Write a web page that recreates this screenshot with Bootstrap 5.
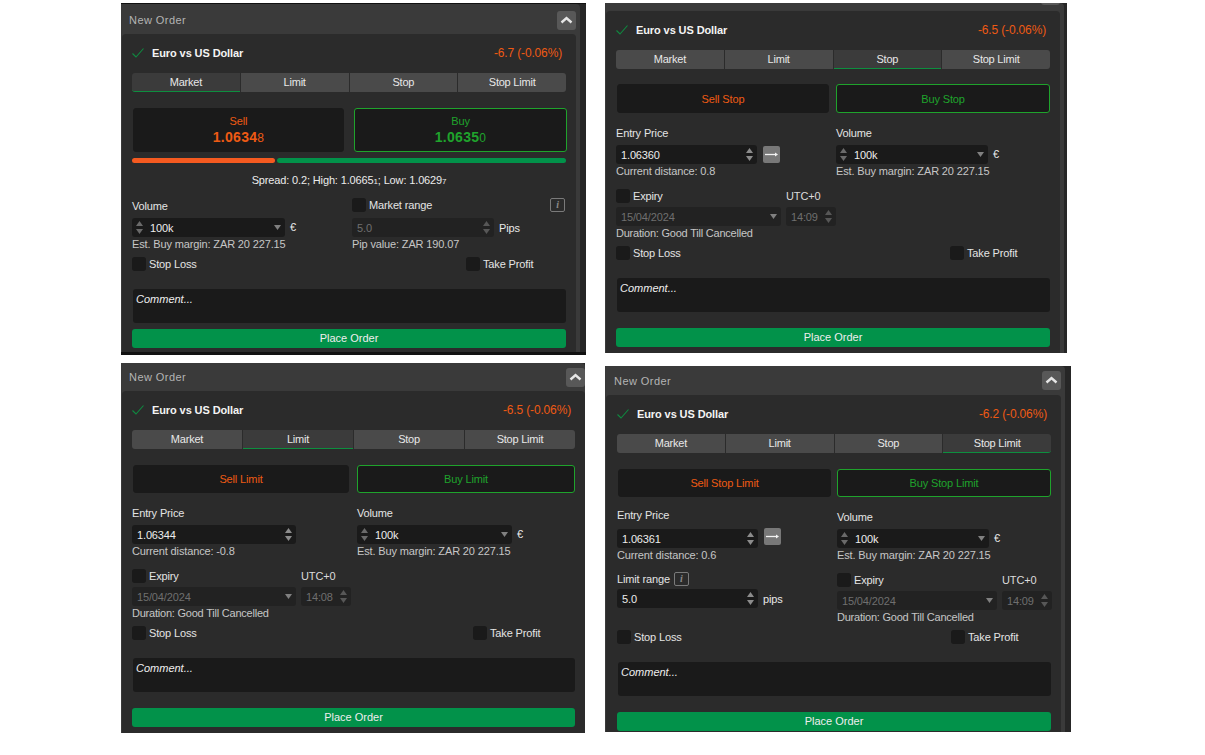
<!DOCTYPE html>
<html lang="en">
<head>
<meta charset="utf-8">
<title>New Order</title>
<link href="https://cdn.jsdelivr.net/npm/bootstrap@5.3.0/dist/css/bootstrap.min.css" rel="stylesheet">
<style>
html,body{background:#fff;margin:0;height:755px;overflow:hidden}
body{font:11px/16px "Liberation Sans",Arial,sans-serif;color:#dedede;letter-spacing:-.14px}
.ow{position:absolute;background:#262626;overflow:hidden}
.ow1{left:121px;top:3px;width:465px;height:352px;border-top:1px solid #111;border-bottom:3px solid #111;--r:6px;--x:4px;--a:220px;--tp:334px;--s:211px;--g:10px;--b:213px;--v:153px;--d:165px;--e:141px;--hd:30px;--pl:10px;--sm:16px;--sh:29px;--ht:7px}
.ow2{left:605px;top:3px;width:462px;height:350px;--r:3px;--x:4px;--a:220px;--tp:334px;--s:212px;--g:7px;--b:214px;--v:152px;--d:165px;--e:141px;--hd:8px;--pl:10px;--sm:15px;--sh:29px;--ht:7px}
.ow3{left:121px;top:363px;width:464px;height:370px;--r:0px;--x:0px;--a:225px;--tp:341px;--s:216px;--g:8px;--b:218px;--v:155px;--d:164px;--e:164px;--hd:28px;--pl:10px;--sm:16px;--sh:28px;--ht:7px}
.ow4{left:605px;top:366px;width:466px;height:366px;--r:6px;--x:4px;--a:220px;--tp:334px;--s:213px;--g:6px;--b:214px;--v:152px;--d:160px;--e:141px;--hd:29px;--pl:11px;--sm:16px;--sh:28px;--ht:8px}
.shell{background:#3a3a3a;height:100%;margin-right:var(--r);padding:0 var(--x) 0 1px;border-radius:0 4px 0 0}
.hdr{height:var(--hd);color:#b4b4b4;letter-spacing:.45px;padding-left:var(--ht)}
.ow1 .hdr{padding-top:2px}
.hdr-peek{overflow:hidden;align-items:flex-start!important}
.hdr-peek .chev{margin-top:-17px}
.chev{width:19px;height:19px;background:#585858;border-radius:3px;flex:none}
.pane{background:#2b2b2b;height:calc(100% - var(--hd));padding:11px 10px 0 var(--pl);border-radius:4px 4px 0 0}
.ttl{height:16px}
.ttl b{font-weight:700;color:#f4f4f4;letter-spacing:-.1px;margin-left:8px}
.chg{color:#ee5a14;font-size:12px;letter-spacing:-.15px;margin-right:4px}
.tabs{gap:1px;margin-top:12px;height:19px}
.tabbtn{flex:1 1 0;background:#4a4a4a;color:#e8e8e8;border:0;border-radius:0;padding:0;font:inherit;letter-spacing:-.22px;line-height:19px;height:19px}
.tabs .tabbtn:first-child{border-radius:3px 0 0 3px}
.tabs .tabbtn:last-child{border-radius:0 3px 3px 0}
.tabbtn.on{background:#3b3b3b;border-bottom:1px solid #0d8f3f}
.side{display:grid;grid-template-columns:var(--s) var(--b);column-gap:var(--g);margin:var(--sm) 0 0 1px}
.tall .sidebtn{height:44px}
.sidebtn{height:var(--sh);background:#1a1a1a;border-radius:3px;border:1px solid #1a1a1a;font:inherit;letter-spacing:-.14px;padding:0;line-height:14px}
.sell{color:#ee5a14}
.buy{color:#1fa32c;border-color:#1fa32c}
.px{display:block;font-weight:700;font-size:14px;line-height:17px;margin-top:1px;letter-spacing:.3px}
.px i{font-style:normal;font-weight:400;font-size:12px}
.bars{gap:2px;height:5px;margin-top:6px}
.bar-s{width:143px;background:#f55a20;border-radius:3px}
.bar-b{flex:1;background:#02924a;border-radius:3px}
.spr{margin-top:9px;text-align:center;color:#ececec;height:16px}
.spr sub{font-size:8px;vertical-align:baseline;position:static}
.cols{display:grid;grid-template-columns:var(--a) 1fr;margin-top:12px}
.mk{margin-top:10px}
.lbl{height:16px;color:#e4e4e4}
.fld{height:19px;background:#1a1a1a;border-radius:3px;margin-top:4px;padding:0 4px;color:#ececec;gap:5px}
.fld-in{background:transparent!important;border:0;padding:0;margin:0;font:inherit;letter-spacing:inherit;color:inherit!important;min-width:0;height:19px;border-radius:0;box-shadow:none!important;flex:1 1 0}
.fld.off{color:#6f6f6f;background:#222}
.fld.off .sp{opacity:.5}
.wv{width:var(--v)}
.we{width:var(--e)}
.wm{width:142px}
.wd{width:var(--d)}
.wt{width:50px}
.pad{padding-left:1px}
.unit{margin-left:5px;margin-top:5px;color:#e8e8e8}
.unit-p{margin-top:6px}
.hint{height:15px;line-height:15px;color:#c6c6c6}
.hint-d{letter-spacing:-.22px}
.cb{width:14px;height:14px;margin:0;background:#1a1a1a;border:0;border-radius:3px;flex:none;float:none!important}
.cbl{height:14px;line-height:14px;gap:3px;color:#e4e4e4}
.cbl label{white-space:nowrap}
.stops{display:grid;grid-template-columns:var(--tp) 1fr;margin-top:5px}
.cmt{display:block;width:calc(100% - 1px);margin:18px 0 0 1px;height:34px;min-height:34px;resize:none;background:#1a1a1a!important;border:0;border-radius:3px;padding:2px 3px;font:italic 11px/16px "Liberation Sans",Arial,sans-serif;color:#eee;box-shadow:none!important}
.cmt::placeholder{color:#eee;opacity:1}
.place{display:block;width:100%;height:19px;margin-top:16px;background:#02924a;border:0;border-radius:3px;padding:0;font:inherit;line-height:19px;color:#eee}
.place.near{margin-top:6px}
.arw{width:17px;height:17px;background:#787878;border-radius:2px;margin:5px 0 0 6px;flex:none}
.ibox{width:15px;height:14px;border:1px solid #7a7a7a;border-radius:2px;font:italic 700 10px/12px "Liberation Serif",serif;color:#8a8a8a;text-align:center;flex:none}
.ibox-r{margin-right:1px}
.sp{width:7px;height:13px;flex:none}
.sp.l{margin-right:2px;opacity:.7}
.dn{width:7px;height:5px;flex:none}
.mid{display:block}
.expm{margin-top:10px;display:flex;align-items:center;width:calc(var(--d) + 55px);justify-content:space-between}
.utc{width:50px;color:#dcdcdc;height:14px;line-height:14px}
.daterow{display:flex;gap:5px}
.daterow .fld{margin-top:4px}
.sliver{position:absolute;left:97px;bottom:-3px;width:20px;height:2px;background:#f56a20}
.sl-l{margin-top:-2px}
.sl-f{margin-top:6px}
.sl-lim{margin-top:8px}
.sl-g{margin-top:2px}
.sl-u{margin-top:4px}
</style>
</head>
<body>
<svg width="0" height="0" class="position-absolute">
<symbol id="spn" viewBox="0 0 7 13"><path d="M3.500 0 7 5H0z" fill="#8c8c8c"/><path d="M0 8h7l-3.500 5z" fill="#8c8c8c"/></symbol>
<symbol id="tri" viewBox="0 0 7 5"><path d="M0 0h7L3.500 5z" fill="#808080"/></symbol>
<symbol id="chk" viewBox="0 0 12 10"><path d="M.5 5.500 4 9 11.500.5" fill="none" stroke="#0f8a40" stroke-width="1.100"/></symbol>
<symbol id="chv" viewBox="0 0 19 19"><path d="M4.500 11.500 9.500 7l5 4.500" fill="none" stroke="#e6e6e6" stroke-width="2.400"/></symbol>
<symbol id="arr" viewBox="0 0 17 17"><path d="M2 8.500h11" stroke="#f2f2f2" stroke-width="1.300"/><path d="M12 6.500 15 8.500 12 10.500z" fill="#f2f2f2"/></symbol>
</svg>

<!-- Market -->
<section class="ow ow1">
 <div class="shell">
  <div class="hdr d-flex align-items-center justify-content-between">New Order<span class="chev"><svg width="19" height="19" class="mid"><use href="#chv"/></svg></span></div>
  <div class="pane">
   <div class="ttl d-flex align-items-center justify-content-between"><div class="d-flex align-items-center"><svg width="12" height="10"><use href="#chk"/></svg><b>Euro vs US Dollar</b></div><span class="chg">-6.7 (-0.06%)</span></div>
   <div class="tabs d-flex"><button class="tabbtn on">Market</button><button class="tabbtn">Limit</button><button class="tabbtn">Stop</button><button class="tabbtn">Stop Limit</button></div>
   <div class="side tall"><button class="sidebtn sell">Sell<span class="px">1.0634<i>8</i></span></button><button class="sidebtn buy">Buy<span class="px">1.0635<i>0</i></span></button></div>
   <div class="bars d-flex"><div class="bar-s"></div><div class="bar-b"></div></div>
   <div class="spr">Spread: 0.2; High: 1.0665<sub>1</sub>; Low: 1.0629<sub>7</sub></div>
   <div class="cols mk">
    <div>
     <div class="lbl">Volume</div>
     <div class="d-flex"><div class="fld wv d-flex align-items-center"><svg class="sp l"><use href="#spn"/></svg><input class="form-control fld-in" value="100k"><svg class="dn"><use href="#tri"/></svg></div><span class="unit">€</span></div>
     <div class="hint">Est. Buy margin: ZAR 20 227.15</div>
    </div>
    <div>
     <div class="lbl d-flex justify-content-between"><div class="cbl d-flex"><input type="checkbox" class="form-check-input cb" id="m1"><label for="m1">Market range</label></div><span class="ibox ibox-r">i</span></div>
     <div class="d-flex"><div class="fld off wm d-flex align-items-center"><input class="form-control fld-in pad" value="5.0" disabled><svg class="sp"><use href="#spn"/></svg></div><span class="unit unit-p">Pips</span></div>
     <div class="hint">Pip value: ZAR 190.07</div>
    </div>
   </div>
   <div class="stops"><div class="cbl d-flex"><input type="checkbox" class="form-check-input cb" id="s1"><label for="s1">Stop Loss</label></div><div class="cbl d-flex"><input type="checkbox" class="form-check-input cb" id="t1"><label for="t1">Take Profit</label></div></div>
   <textarea class="form-control cmt" placeholder="Comment..."></textarea>
   <button class="place near">Place Order</button>
  </div>
 </div>
 <span class="sliver"></span>
</section>

<!-- Stop -->
<section class="ow ow2">
 <div class="shell">
  <div class="hdr hdr-peek d-flex justify-content-end"><span class="chev"><svg width="19" height="19" class="mid"><use href="#chv"/></svg></span></div>
  <div class="pane">
   <div class="ttl d-flex align-items-center justify-content-between"><div class="d-flex align-items-center"><svg width="12" height="10"><use href="#chk"/></svg><b>Euro vs US Dollar</b></div><span class="chg">-6.5 (-0.06%)</span></div>
   <div class="tabs d-flex"><button class="tabbtn">Market</button><button class="tabbtn">Limit</button><button class="tabbtn on">Stop</button><button class="tabbtn">Stop Limit</button></div>
   <div class="side"><button class="sidebtn sell">Sell Stop</button><button class="sidebtn buy">Buy Stop</button></div>
   <div class="cols">
    <div>
     <div class="lbl">Entry Price</div>
     <div class="d-flex"><div class="fld we d-flex align-items-center"><input class="form-control fld-in pad" value="1.06360"><svg class="sp"><use href="#spn"/></svg></div><span class="arw"><svg width="17" height="17" class="mid"><use href="#arr"/></svg></span></div>
     <div class="hint">Current distance: 0.8</div>
    </div>
    <div>
     <div class="lbl">Volume</div>
     <div class="d-flex"><div class="fld wv d-flex align-items-center"><svg class="sp l"><use href="#spn"/></svg><input class="form-control fld-in" value="100k"><svg class="dn"><use href="#tri"/></svg></div><span class="unit">€</span></div>
     <div class="hint">Est. Buy margin: ZAR 20 227.15</div>
    </div>
   </div>
   <div class="expm"><div class="cbl d-flex"><input type="checkbox" class="form-check-input cb" id="e2"><label for="e2">Expiry</label></div><span class="utc">UTC+0</span></div>
   <div class="daterow"><div class="fld off wd d-flex align-items-center"><input class="form-control fld-in pad" value="15/04/2024" disabled><svg class="dn"><use href="#tri"/></svg></div><div class="fld off wt d-flex align-items-center"><input class="form-control fld-in pad" value="14:09" disabled><svg class="sp"><use href="#spn"/></svg></div></div>
   <div class="hint hint-d">Duration: Good Till Cancelled</div>
   <div class="stops"><div class="cbl d-flex"><input type="checkbox" class="form-check-input cb" id="s2"><label for="s2">Stop Loss</label></div><div class="cbl d-flex"><input type="checkbox" class="form-check-input cb" id="t2"><label for="t2">Take Profit</label></div></div>
   <textarea class="form-control cmt" placeholder="Comment..."></textarea>
   <button class="place">Place Order</button>
  </div>
 </div>
</section>

<!-- Limit -->
<section class="ow ow3">
 <div class="shell">
  <div class="hdr d-flex align-items-center justify-content-between">New Order<span class="chev"><svg width="19" height="19" class="mid"><use href="#chv"/></svg></span></div>
  <div class="pane">
   <div class="ttl d-flex align-items-center justify-content-between"><div class="d-flex align-items-center"><svg width="12" height="10"><use href="#chk"/></svg><b>Euro vs US Dollar</b></div><span class="chg">-6.5 (-0.06%)</span></div>
   <div class="tabs d-flex"><button class="tabbtn">Market</button><button class="tabbtn on">Limit</button><button class="tabbtn">Stop</button><button class="tabbtn">Stop Limit</button></div>
   <div class="side"><button class="sidebtn sell">Sell Limit</button><button class="sidebtn buy">Buy Limit</button></div>
   <div class="cols">
    <div>
     <div class="lbl">Entry Price</div>
     <div class="d-flex"><div class="fld we d-flex align-items-center"><input class="form-control fld-in pad" value="1.06344"><svg class="sp"><use href="#spn"/></svg></div></div>
     <div class="hint">Current distance: -0.8</div>
    </div>
    <div>
     <div class="lbl">Volume</div>
     <div class="d-flex"><div class="fld wv d-flex align-items-center"><svg class="sp l"><use href="#spn"/></svg><input class="form-control fld-in" value="100k"><svg class="dn"><use href="#tri"/></svg></div><span class="unit">€</span></div>
     <div class="hint">Est. Buy margin: ZAR 20 227.15</div>
    </div>
   </div>
   <div class="expm"><div class="cbl d-flex"><input type="checkbox" class="form-check-input cb" id="e3"><label for="e3">Expiry</label></div><span class="utc">UTC+0</span></div>
   <div class="daterow"><div class="fld off wd d-flex align-items-center"><input class="form-control fld-in pad" value="15/04/2024" disabled><svg class="dn"><use href="#tri"/></svg></div><div class="fld off wt d-flex align-items-center"><input class="form-control fld-in pad" value="14:08" disabled><svg class="sp"><use href="#spn"/></svg></div></div>
   <div class="hint hint-d">Duration: Good Till Cancelled</div>
   <div class="stops"><div class="cbl d-flex"><input type="checkbox" class="form-check-input cb" id="s3"><label for="s3">Stop Loss</label></div><div class="cbl d-flex"><input type="checkbox" class="form-check-input cb" id="t3"><label for="t3">Take Profit</label></div></div>
   <textarea class="form-control cmt" placeholder="Comment..."></textarea>
   <button class="place">Place Order</button>
  </div>
 </div>
</section>

<!-- Stop Limit -->
<section class="ow ow4">
 <div class="shell">
  <div class="hdr d-flex align-items-center justify-content-between">New Order<span class="chev"><svg width="19" height="19" class="mid"><use href="#chv"/></svg></span></div>
  <div class="pane">
   <div class="ttl d-flex align-items-center justify-content-between"><div class="d-flex align-items-center"><svg width="12" height="10"><use href="#chk"/></svg><b>Euro vs US Dollar</b></div><span class="chg">-6.2 (-0.06%)</span></div>
   <div class="tabs d-flex"><button class="tabbtn">Market</button><button class="tabbtn">Limit</button><button class="tabbtn">Stop</button><button class="tabbtn on">Stop Limit</button></div>
   <div class="side"><button class="sidebtn sell">Sell Stop Limit</button><button class="sidebtn buy">Buy Stop Limit</button></div>
   <div class="cols">
    <div>
     <div class="lbl sl-l">Entry Price</div>
     <div class="d-flex"><div class="fld we sl-f d-flex align-items-center"><input class="form-control fld-in pad" value="1.06361"><svg class="sp"><use href="#spn"/></svg></div><span class="arw"><svg width="17" height="17" class="mid"><use href="#arr"/></svg></span></div>
     <div class="hint">Current distance: 0.6</div>
     <div class="lbl sl-lim d-flex align-items-center gap-1">Limit range <span class="ibox">i</span></div>
     <div class="d-flex"><div class="fld we sl-g d-flex align-items-center"><input class="form-control fld-in pad" value="5.0"><svg class="sp"><use href="#spn"/></svg></div><span class="unit sl-u">pips</span></div>
    </div>
    <div>
     <div class="lbl">Volume</div>
     <div class="d-flex"><div class="fld wv d-flex align-items-center"><svg class="sp l"><use href="#spn"/></svg><input class="form-control fld-in" value="100k"><svg class="dn"><use href="#tri"/></svg></div><span class="unit">€</span></div>
     <div class="hint">Est. Buy margin: ZAR 20 227.15</div>
     <div class="expm"><div class="cbl d-flex"><input type="checkbox" class="form-check-input cb" id="e4"><label for="e4">Expiry</label></div><span class="utc">UTC+0</span></div>
     <div class="daterow"><div class="fld off wd d-flex align-items-center"><input class="form-control fld-in pad" value="15/04/2024" disabled><svg class="dn"><use href="#tri"/></svg></div><div class="fld off wt d-flex align-items-center"><input class="form-control fld-in pad" value="14:09" disabled><svg class="sp"><use href="#spn"/></svg></div></div>
     <div class="hint hint-d">Duration: Good Till Cancelled</div>
    </div>
   </div>
   <div class="stops"><div class="cbl d-flex"><input type="checkbox" class="form-check-input cb" id="s4"><label for="s4">Stop Loss</label></div><div class="cbl d-flex"><input type="checkbox" class="form-check-input cb" id="t4"><label for="t4">Take Profit</label></div></div>
   <textarea class="form-control cmt" placeholder="Comment..."></textarea>
   <button class="place">Place Order</button>
  </div>
 </div>
</section>
<script src="https://cdn.jsdelivr.net/npm/bootstrap@5.3.0/dist/js/bootstrap.bundle.min.js"></script>
</body>
</html>
